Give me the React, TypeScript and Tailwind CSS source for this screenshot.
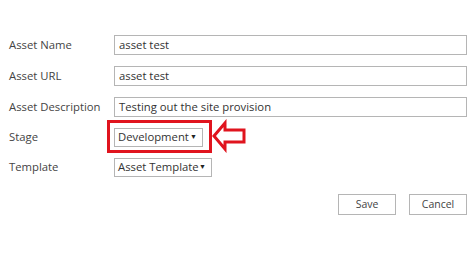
import React from 'react';

const font = { fontFamily: '"Open Sans", "Noto Sans", sans-serif' };

const Field = ({ label, value }: { label: string; value: string }) => (
    <div className="flex items-center h-[20px]">
        <div className="w-[105px] text-[11.3px] text-[#444] whitespace-nowrap">{label}</div>
        <div className="w-[353px] h-[20px] border border-[#b5b5b5] bg-white px-[4px] flex items-center text-[11.3px] text-[#333] whitespace-nowrap">
            {value}
        </div>
    </div>
);

const Select = ({ value, width }: { value: string; width: string }) => (
    <div className={`${width} h-[19px] border border-[#b5b5b5] bg-white pl-[3px] pr-[5px] flex items-center justify-between text-[11.3px] text-[#333] whitespace-nowrap`}>
        <span>{value}</span>
        <span className="text-[7px] text-[#222]">▼</span>
    </div>
);

export default function App() {
    return (
        <div className="w-[474px] h-[257px] bg-white pt-[35px] pl-[9px]" style={font}>
            <div className="flex flex-col gap-[11px]">
                <Field label="Asset Name" value="asset test" />
                <Field label="Asset URL" value="asset test" />
                <Field label="Asset Description" value="Testing out the site provision" />

                {/* Stage, with the red annotation */}
                <div className="flex items-center h-[19px]">
                    <div className="w-[105px] text-[11.3px] text-[#444]">Stage</div>
                    <div className="relative">
                        <Select value="Development" width="w-[89px]" />
                        <div className="absolute -left-[7px] -right-[9px] -top-[8px] -bottom-[6px] border-[3px] border-[#e0141e]" />
                        <svg className="absolute left-[97px] -top-[9px]" width="38" height="34" viewBox="0 0 38 34">
                            <path
                                d="M3 17 L14 4 L14 11 L33 11 L33 23 L14 23 L14 30 Z"
                                fill="white"
                                stroke="#e0141e"
                                strokeWidth="3"
                                strokeLinejoin="miter"
                            />
                        </svg>
                    </div>
                </div>

                <div className="flex items-center h-[19px]">
                    <div className="w-[105px] text-[11.3px] text-[#444]">Template</div>
                    <Select value="Asset Template" width="w-[98px]" />
                </div>
            </div>

            <div className="flex justify-end gap-[13px] mt-[17px] pr-[7px]">
                <button className="w-[58px] h-[21px] border border-[#b5b5b5] bg-white text-[10.5px] text-[#444]">Save</button>
                <button className="w-[58px] h-[21px] border border-[#b5b5b5] bg-white text-[10.5px] text-[#444]">Cancel</button>
            </div>
        </div>
    );
}
